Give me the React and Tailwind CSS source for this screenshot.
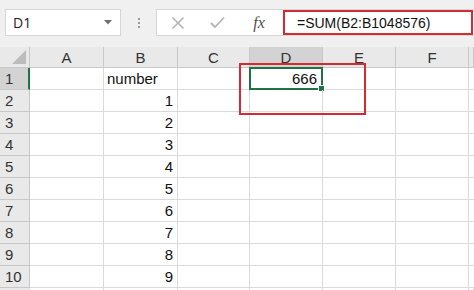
import React from "react";

const cols = ["A", "B", "C", "D", "E", "F", ""];
const widths = [74, 74, 72, 73, 73, 73];

export default function App() {
  const rows = Array.from({ length: 10 }, (_, i) => i + 1);
  return (
    <div className="w-[474px] h-[290px] overflow-hidden bg-white relative" style={{ fontFamily: '"Open Sans", "Liberation Sans", sans-serif' }}>
      {/* toolbar */}
      <div className="h-[47px] bg-[#f0f0f0] flex items-start pt-[9px]">
        <div className="ml-[5px] w-[116px] h-[27px] bg-white border border-[#d6d6d6] flex items-center justify-between pl-[7px] pr-[8px]">
          <span className="text-[14px] text-[#222] leading-none">D1</span>
          <svg width="8" height="5" viewBox="0 0 8 5"><path d="M0 0 L8 0 L4 4.5 Z" fill="#707070" /></svg>
        </div>
        <div className="w-[35px] h-[27px] flex flex-col items-center justify-center gap-[2px]">
          <div className="w-[2px] h-[2px] bg-[#9a9a9a]" />
          <div className="w-[2px] h-[2px] bg-[#9a9a9a]" />
          <div className="w-[2px] h-[2px] bg-[#9a9a9a]" />
        </div>
        <div className="flex-1 h-[27px] bg-white border-y border-l border-[#d6d6d6] flex items-center">
          <div className="w-[38px] flex justify-center pl-[4px]">
            <svg width="14" height="14" viewBox="0 0 14 14"><path d="M1.5 1.5 L12.5 12.5 M12.5 1.5 L1.5 12.5" stroke="#b4b4b4" strokeWidth="1.6" /></svg>
          </div>
          <div className="w-[40px] flex justify-center pl-[4px]">
            <svg width="15" height="13" viewBox="0 0 15 13"><path d="M1 7 L5 11 L14 1.5" stroke="#b4b4b4" strokeWidth="1.8" fill="none" /></svg>
          </div>
          <div className="w-[48px] flex justify-center">
            <span className="text-[16px] italic text-[#505050] leading-none" style={{ fontFamily: '"Liberation Serif", serif' }}>fx</span>
          </div>
          <div className="flex-1 mr-[1px] h-[25px] border-2 border-[#d42a32] flex items-center pl-[12px]">
            <span className="text-[14px] text-[#111] leading-none" style={{ fontFamily: '"Liberation Sans", sans-serif' }}>=SUM(B2:B1048576)</span>
          </div>
        </div>
      </div>

      {/* grid */}
      <div className="grid grid-cols-[30px_74px_74px_72px_73px_73px_73px_1fr] grid-rows-[21px_repeat(11,22px)]" style={{ fontFamily: '"Liberation Sans", sans-serif' }}>
        <div className="bg-[#e9e9e9] border-r border-b border-[#c8c8c8] relative">
          <svg className="absolute right-[3px] bottom-[3px]" width="14" height="14" viewBox="0 0 14 14"><path d="M14 0 L14 14 L0 14 Z" fill="#bcbcbc" /></svg>
        </div>
        {cols.map((c, i) => (
          <div key={c + i} className={`${c === "D" ? "bg-[#d3d3d3]" : "bg-[#e9e9e9]"} border-r border-b border-[#c8c8c8] flex items-center justify-center text-[15px] text-[#333] leading-none`}>
            {c}
          </div>
        ))}
        {rows.map((r) => (
          <React.Fragment key={r}>
            <div className={`${r === 1 ? "bg-[#d3d3d3] border-r-2 border-r-[#217346]" : "bg-[#e9e9e9] border-r border-r-[#c8c8c8]"} border-b border-b-[#c8c8c8] flex items-center pl-[5px] text-[15px] text-[#333] leading-none`}>
              {r}
            </div>
            <div className="border-r border-b border-[#dadada]" />
            <div className={`border-r border-b border-[#dadada] flex items-center text-[15px] text-[#111] leading-none ${r === 1 ? "justify-start pl-[3px]" : "justify-end pr-[4px]"}`}>
              {r === 1 ? "number" : r - 1}
            </div>
            <div className="border-r border-b border-[#dadada]" />
            <div className="border-r border-b border-[#dadada] relative flex items-center justify-end pr-[5px] text-[15px] text-[#111] leading-none">
              {r === 1 && (
                <>
                  <div className="absolute -left-px -top-px -right-px -bottom-px border-2 border-[#217346]" />
                  <div className="absolute -right-[3px] -bottom-[3px] w-[5px] h-[5px] bg-[#217346] border border-white box-content" />
                  <span className="relative">666</span>
                </>
              )}
            </div>
            <div className="border-r border-b border-[#dadada]" />
            <div className="border-r border-b border-[#dadada]" />
            <div className="border-b border-[#dadada]" />
          </React.Fragment>
        ))}
        {cols.concat([""]).map((c, i) => (
          <div key={"last" + i} className={`${i === 0 ? "bg-[#e9e9e9]" : ""} border-r border-[#dadada]`} />
        ))}
      </div>

      {/* red highlight rectangle */}
      <div className="absolute left-[239px] top-[63px] w-[127px] h-[52px] border-2 border-[#d42a32] pointer-events-none" />
    </div>
  );
}
